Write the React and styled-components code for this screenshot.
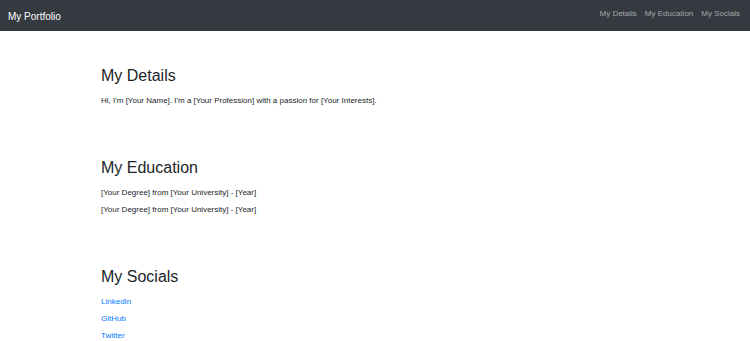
import React from 'react';
import styled, { createGlobalStyle } from 'styled-components';

const GlobalStyle = createGlobalStyle`
  html, body {
    margin: 0;
    padding: 0;
    background: #fff;
    font-family: "Liberation Sans", Arial, sans-serif;
    color: #212529;
  }
`;

const Navbar = styled.nav`
  height: 31px;
  background-color: #343a40;
  display: flex;
  align-items: center;
  justify-content: space-between;
  padding: 0 10px 0 8px;
`;

const Brand = styled.a`
  color: #fff;
  font-size: 10px;
  text-decoration: none;
  margin-top: 1px;
`;

const NavLinks = styled.div`
  display: flex;
  gap: 8px;
  margin-top: -4px;
`;

const NavLink = styled.a`
  color: rgba(255, 255, 255, 0.55);
  font-size: 8px;
  text-decoration: none;
`;

const Main = styled.main`
  padding: 35px 0 0 101px;
`;

const Section = styled.section`
  display: flex;
  flex-direction: column;
  gap: 5px;
  margin-bottom: 51px;
`;

const Heading = styled.h2`
  font-size: 16px;
  font-weight: 500;
  line-height: 20px;
  margin: 0 0 4px;
`;

const Line = styled.p`
  font-size: 8px;
  line-height: 12px;
  margin: 0;
`;

const Link = styled.a`
  font-size: 8px;
  line-height: 12px;
  color: #007bff;
  text-decoration: none;
`;

export default function App() {
  return (
    <>
      <GlobalStyle />
      <Navbar>
        <Brand href="#">My Portfolio</Brand>
        <NavLinks>
          <NavLink href="#details">My Details</NavLink>
          <NavLink href="#education">My Education</NavLink>
          <NavLink href="#socials">My Socials</NavLink>
        </NavLinks>
      </Navbar>
      <Main>
        <Section id="details">
          <Heading>My Details</Heading>
          <Line>Hi, I'm [Your Name]. I'm a [Your Profession] with a passion for [Your Interests].</Line>
        </Section>
        <Section id="education">
          <Heading>My Education</Heading>
          <Line>[Your Degree] from [Your University] - [Year]</Line>
          <Line>[Your Degree] from [Your University] - [Year]</Line>
        </Section>
        <Section id="socials">
          <Heading>My Socials</Heading>
          <Link href="#">LinkedIn</Link>
          <Link href="#">GitHub</Link>
          <Link href="#">Twitter</Link>
        </Section>
      </Main>
    </>
  );
}
